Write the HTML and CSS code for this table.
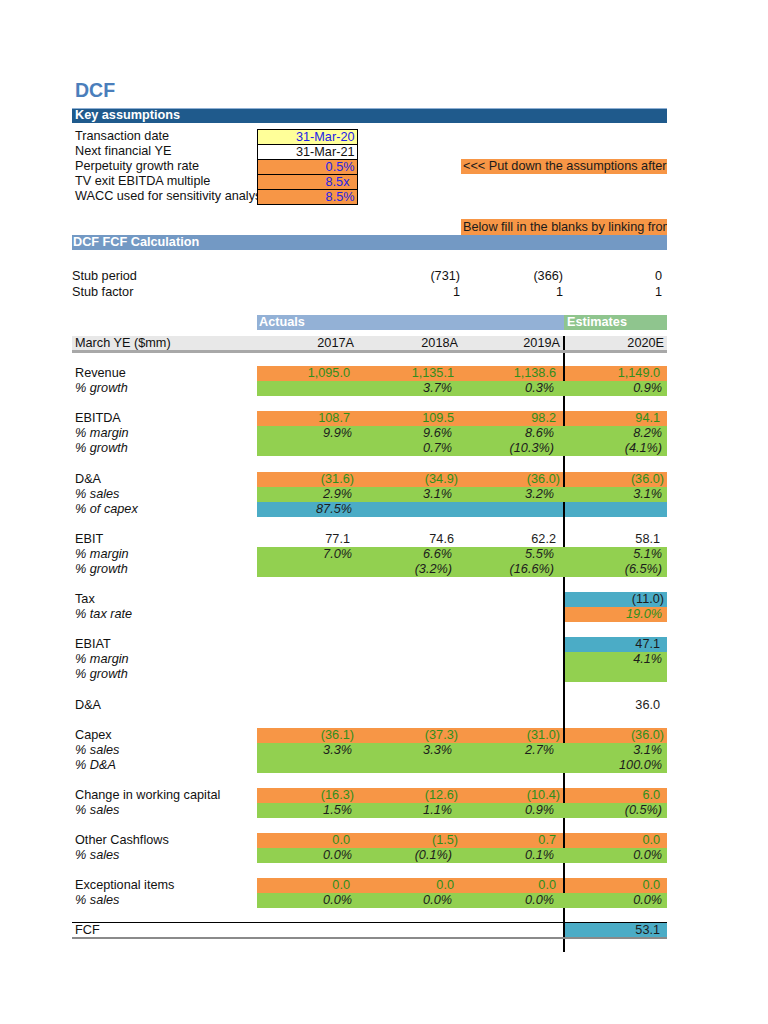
FILE: index.html
```html
<!DOCTYPE html>
<html>
<head>
    <title>DCF</title>
    <link rel="stylesheet" href="styles.css">
</head>
<body>
    <div class="sheet">
        <h1>DCF</h1>
        <table>
            <colgroup>
                <col style="width: 185px">
                <col style="width: 100px">
                <col style="width: 104px">
                <col style="width: 103px">
                <col style="width: 103px">
            </colgroup>

            <!-- Key assumptions -->
            <tr class="bar dark"><td colspan="5" class="lbl">Key assumptions</td></tr>
            <tr class="sp6"><td colspan="5"></td></tr>
            <tr><td class="lbl">Transaction date</td><td class="inp yel blu">31-Mar-20</td><td colspan="3"></td></tr>
            <tr><td class="lbl">Next financial YE</td><td class="inp">31-Mar-21</td><td colspan="3"></td></tr>
            <tr><td class="lbl">Perpetuity growth rate</td><td class="inp o blu">0.5%</td><td></td><td colspan="2" class="note o">&lt;&lt;&lt; Put down the assumptions after</td></tr>
            <tr><td class="lbl">TV exit EBITDA multiple</td><td class="inp o blu x">8.5x</td><td colspan="3"></td></tr>
            <tr><td class="lbl">WACC used for sensitivity analysis</td><td class="inp o blu">8.5%</td><td colspan="3"></td></tr>
            <tr class="h15"><td colspan="5"></td></tr>
            <tr class="h16"><td colspan="3"></td><td colspan="2" class="note o">Below fill in the blanks by linking from</td></tr>

            <!-- DCF FCF Calculation -->
            <tr class="bar mid"><td colspan="5" class="lbl sub">DCF FCF Calculation</td></tr>
            <tr class="h18"><td colspan="5"></td></tr>
            <tr class="h16"><td class="lbl st">Stub period</td><td></td><td class="stb">(731)</td><td class="stb">(366)</td><td class="stb e0">0</td></tr>
            <tr class="h16"><td class="lbl st">Stub factor</td><td></td><td class="stb">1</td><td class="stb">1</td><td class="stb e0">1</td></tr>
            <tr><td colspan="5"></td></tr>
            <tr class="bar"><td></td><td colspan="3" class="act">Actuals</td><td class="est">Estimates</td></tr>
            <tr class="sp6"><td colspan="5"></td></tr>
            <tr class="ln yr"><td class="lbl">March YE ($mm)</td><td class="hd">2017A</td><td class="hd">2018A</td><td class="d hd">2019A</td><td class="hd">2020E</td></tr>
            <tr class="ln h14"><td></td><td></td><td></td><td class="d"></td><td></td></tr>

            <tr class="ln"><td class="lbl">Revenue</td><td class="o p">1,095.0</td><td class="o p">1,135.1</td><td class="d o p">1,138.6</td><td class="o p">1,149.0</td></tr>
            <tr class="ln"><td class="lbl i">% growth</td><td class="g"></td><td class="g pc">3.7%</td><td class="d g pc">0.3%</td><td class="g pc">0.9%</td></tr>
            <tr class="ln"><td></td><td></td><td></td><td class="d"></td><td></td></tr>

            <tr class="ln"><td class="lbl">EBITDA</td><td class="o p">108.7</td><td class="o p">109.5</td><td class="d o p">98.2</td><td class="o p">94.1</td></tr>
            <tr class="ln"><td class="lbl i">% margin</td><td class="g pc">9.9%</td><td class="g pc">9.6%</td><td class="d g pc">8.6%</td><td class="g pc">8.2%</td></tr>
            <tr class="ln"><td class="lbl i">% growth</td><td class="g"></td><td class="g pc">0.7%</td><td class="d g pc">(10.3%)</td><td class="g pc">(4.1%)</td></tr>
            <tr class="ln h16"><td></td><td></td><td></td><td class="d"></td><td></td></tr>

            <tr class="ln"><td class="lbl">D&amp;A</td><td class="o n">(31.6)</td><td class="o n">(34.9)</td><td class="d o n">(36.0)</td><td class="o n">(36.0)</td></tr>
            <tr class="ln"><td class="lbl i">% sales</td><td class="g pc">2.9%</td><td class="g pc">3.1%</td><td class="d g pc">3.2%</td><td class="g pc">3.1%</td></tr>
            <tr class="ln"><td class="lbl i">% of capex</td><td class="b pc">87.5%</td><td class="b"></td><td class="d b"></td><td class="b"></td></tr>
            <tr class="ln"><td></td><td></td><td></td><td class="d"></td><td></td></tr>

            <tr class="ln"><td class="lbl">EBIT</td><td class="k p">77.1</td><td class="k p">74.6</td><td class="d k p">62.2</td><td class="k p">58.1</td></tr>
            <tr class="ln"><td class="lbl i">% margin</td><td class="g pc">7.0%</td><td class="g pc">6.6%</td><td class="d g pc">5.5%</td><td class="g pc">5.1%</td></tr>
            <tr class="ln"><td class="lbl i">% growth</td><td class="g"></td><td class="g pc">(3.2%)</td><td class="d g pc">(16.6%)</td><td class="g pc">(6.5%)</td></tr>
            <tr class="ln"><td></td><td></td><td></td><td class="d"></td><td></td></tr>

            <tr class="ln"><td class="lbl">Tax</td><td></td><td></td><td class="d"></td><td class="b k n">(11.0)</td></tr>
            <tr class="ln"><td class="lbl i">% tax rate</td><td></td><td></td><td class="d"></td><td class="o pc">19.0%</td></tr>
            <tr class="ln"><td></td><td></td><td></td><td class="d"></td><td></td></tr>

            <tr class="ln"><td class="lbl">EBIAT</td><td></td><td></td><td class="d"></td><td class="b k p">47.1</td></tr>
            <tr class="ln"><td class="lbl i">% margin</td><td></td><td></td><td class="d"></td><td class="g pc">4.1%</td></tr>
            <tr class="ln"><td class="lbl i">% growth</td><td></td><td></td><td class="d"></td><td class="g"></td></tr>
            <tr class="ln h16"><td></td><td></td><td></td><td class="d"></td><td></td></tr>

            <tr class="ln"><td class="lbl">D&amp;A</td><td></td><td></td><td class="d"></td><td class="k p">36.0</td></tr>
            <tr class="ln"><td></td><td></td><td></td><td class="d"></td><td></td></tr>

            <tr class="ln"><td class="lbl">Capex</td><td class="o n">(36.1)</td><td class="o n">(37.3)</td><td class="d o n">(31.0)</td><td class="o n">(36.0)</td></tr>
            <tr class="ln"><td class="lbl i">% sales</td><td class="g pc">3.3%</td><td class="g pc">3.3%</td><td class="d g pc">2.7%</td><td class="g pc">3.1%</td></tr>
            <tr class="ln"><td class="lbl i">% D&amp;A</td><td class="g"></td><td class="g"></td><td class="d g"></td><td class="g pc">100.0%</td></tr>
            <tr class="ln"><td></td><td></td><td></td><td class="d"></td><td></td></tr>

            <tr class="ln"><td class="lbl">Change in working capital</td><td class="o n">(16.3)</td><td class="o n">(12.6)</td><td class="d o n">(10.4)</td><td class="o p">6.0</td></tr>
            <tr class="ln"><td class="lbl i">% sales</td><td class="g pc">1.5%</td><td class="g pc">1.1%</td><td class="d g pc">0.9%</td><td class="g pc">(0.5%)</td></tr>
            <tr class="ln"><td></td><td></td><td></td><td class="d"></td><td></td></tr>

            <tr class="ln"><td class="lbl">Other Cashflows</td><td class="o p">0.0</td><td class="o n">(1.5)</td><td class="d o p">0.7</td><td class="o p">0.0</td></tr>
            <tr class="ln"><td class="lbl i">% sales</td><td class="g pc">0.0%</td><td class="g pc">(0.1%)</td><td class="d g pc">0.1%</td><td class="g pc">0.0%</td></tr>
            <tr class="ln"><td></td><td></td><td></td><td class="d"></td><td></td></tr>

            <tr class="ln"><td class="lbl">Exceptional items</td><td class="o p">0.0</td><td class="o p">0.0</td><td class="d o p">0.0</td><td class="o p">0.0</td></tr>
            <tr class="ln"><td class="lbl i">% sales</td><td class="g pc">0.0%</td><td class="g pc">0.0%</td><td class="d g pc">0.0%</td><td class="g pc">0.0%</td></tr>
            <tr class="ln"><td></td><td></td><td></td><td class="d"></td><td></td></tr>

            <tr class="ln fcf"><td class="lbl">FCF</td><td></td><td></td><td class="d"></td><td class="b k p">53.1</td></tr>
            <tr class="ln h14"><td></td><td></td><td></td><td class="d"></td><td></td></tr>
        </table>
    </div>
</body>
</html>
```

FILE: styles.css
```css
body {
    margin: 0;
    background: #fff;
    font-family: "Liberation Sans", Arial, sans-serif;
    font-size: 12.7px;
    color: #111;
}

.sheet {
    width: 595px;
    margin-left: 72px;
    padding-top: 78px;
    overflow: hidden;
}

h1 {
    margin: 0;
    height: 30px;
    line-height: 24px;
    padding-left: 3px;
    font-size: 19.5px;
    color: #4a7ebb;
}

table {
    width: 595px;
    border-collapse: collapse;
    table-layout: fixed;
}

tr {
    height: 15px;
}

td {
    padding: 0 3px 0 0;
    line-height: 15px;
    white-space: nowrap;
    overflow: hidden;
    text-align: right;
}

tr.sp6 { height: 6px; }
tr.h14 { height: 14px; }
tr.h15 { height: 15px; }
tr.h16 { height: 16px; }
tr.h18 { height: 18px; }

td.lbl {
    text-align: left;
    padding-left: 3px;
}

td.lbl.st {
    padding-left: 0;
}

td.i,
td.pc {
    font-style: italic;
}

/* section bars */
tr.bar td {
    color: #fff;
    font-weight: bold;
}

tr.dark td {
    background: #1f5a8c;
    box-shadow: inset 0 1px 0 #8fb0d4;
}

tr.mid td {
    background: #7399c4;
}

td.sub {
    padding-left: 1px;
}

td.act {
    background: #93b1d6;
    text-align: left;
    padding-left: 2px;
}

td.est {
    background: #8fc58e;
    text-align: left;
    padding-left: 3px;
}

/* input boxes */
td.inp {
    border: 1px solid #000;
    line-height: 14px;
    padding-right: 2px;
}

td.inp.x {
    padding-right: 7px;
}

td.yel { background: #ffff99; }
td.inp.blu { color: #2222e6; }

td.note {
    text-align: left;
    padding-left: 2px;
    color: #1a1a1a;
}

td.stb { padding-right: 1px; }
td.stb.e0 { padding-right: 5px; }

/* year header */
tr.yr td {
    background: #e8e8e8;
    border-bottom: 3px solid #a8a8a8;
    line-height: 14px;
}

td.hd { padding-right: 3px; }

/* fills */
.o { background: #f79646; color: #2f8f1c; }
.g { background: #92d050; color: #1c1c1c; }
.b { background: #4bacc6; color: #1c1c1c; }
td.k { color: #1c1c1c; }

td.p { padding-right: 7px; }
td.n { padding-right: 3px; }
td.pc { padding-right: 5px; }
td.pc:nth-child(3),
td.d.pc { padding-right: 9px; }

/* divider between actuals and estimates */
tr.ln td.d {
    border-right: 2px solid #000;
}

tr.ln td.d.g {
    border-right-color: #92d050;
}

tr.fcf td {
    border-top: 1px solid #000;
    border-bottom: 2px solid #8a8a8a;
    line-height: 14px;
}
```
